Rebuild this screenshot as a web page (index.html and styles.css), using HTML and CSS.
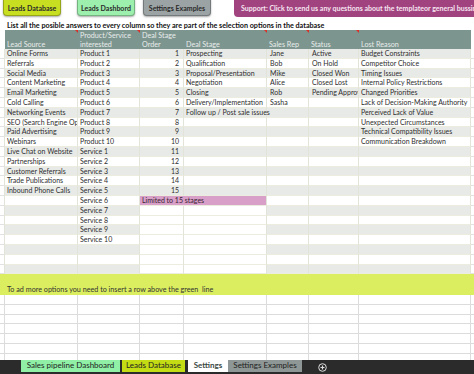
FILE: index.html
```html
<!DOCTYPE html>
<html lang="en">
<head>
  <meta charset="UTF-8">
  <title>Settings</title>
  <link rel="stylesheet" href="styles.css">
</head>
<body>

  <!-- top buttons -->
  <div class="top">
    <a class="btn btn-db">Leads Database</a>
    <a class="btn btn-dash">Leads Dashbord</a>
    <a class="btn btn-set">Settings Examples</a>
    <div class="support">Support: Click to send us any questions about the templateor general bussiness</div>
  </div>

  <div class="note">List  all the posible answers to every column so they are part of the selection options in the database</div>

  <div class="sheet">
    <div class="row head">
      <div class="c blank"></div>
      <div class="c flag"><span>Lead Source</span></div>
      <div class="c flag"><span>Product/Service</span><span>interested</span></div>
      <div class="c"><span>Deal Stage</span><span>Order</span></div>
      <div class="c flag"><span>Deal Stage</span></div>
      <div class="c flag"><span>Sales Rep</span></div>
      <div class="c flag"><span>Status</span></div>
      <div class="c"><span>Lost Reason</span></div>
      <div class="c blank"></div>
    </div>
    <div id="rows"></div>
    <div class="row band">
      <div class="c band-text">To ad more options you need to insert a row above the green&nbsp; line</div>
    </div>
    <div id="empty"></div>
  </div>

  <!-- sheet tabs -->
  <div class="tabs">
    <div class="tab tab-pipe">Sales pipeline Dashboard</div>
    <div class="tab tab-db">Leads Database</div>
    <div class="tab tab-active">Settings</div>
    <div class="tab tab-ex">Settings Examples</div>
    <div class="add">
      <svg width="9" height="9" viewBox="0 0 9 9"><circle cx="4.5" cy="4.5" r="3.8" fill="none" stroke="#ddd" stroke-width="1"/><path d="M4.5 2.5v4M2.5 4.5h4" stroke="#ddd" stroke-width="1.2"/></svg>
    </div>
  </div>

  <script>
    const sources = ["Online Forms", "Referrals", "Social Media", "Content Marketing", "Email Marketing",
      "Cold Calling", "Networking Events", "SEO (Search Engine Optimization)", "Paid Advertising", "Webinars",
      "Live Chat on Website", "Partnerships", "Customer Referrals", "Trade Publications", "Inbound Phone Calls"];
    const products = [];
    for (let i = 1; i <= 10; i++) products.push("Product " + i);
    for (let i = 1; i <= 10; i++) products.push("Service " + i);
    const stages = ["Prospecting", "Qualification", "Proposal/Presentation", "Negotiation", "Closing",
      "Delivery/Implementation", "Follow up / Post sale issues"];
    const reps = ["Jane", "Bob", "Mike", "Alice", "Rob", "Sasha"];
    const status = ["Active", "On Hold", "Closed Won", "Closed Lost", "Pending Approval"];
    const reasons = ["Budget Constraints", "Competitor Choice", "Timing Issues", "Internal Policy Restrictions",
      "Changed Priorities", "Lack of Decision-Making Authority", "Perceived Lack of Value",
      "Unexpected Circumstances", "Technical Compatibility Issues", "Communication Breakdown"];

    const rows = document.getElementById("rows");
    for (let i = 0; i < 23; i++) {
      const row = document.createElement("div");
      row.className = "row data" + (i % 2 === 0 ? " g" : "");
      const inStages = i < 15;
      let html = '<div class="c blank"></div>';
      html += `<div class="c">${sources[i] || ""}</div>`;
      html += `<div class="c">${products[i] || ""}</div>`;
      if (inStages) {
        html += `<div class="c num">${i + 1}</div>`;
        html += `<div class="c${i === 6 ? " spill" : ""}">${stages[i] || ""}</div>`;
      } else if (i === 15) {
        html += '<div class="c pink">Limited to 15 stages</div>';
      } else {
        html += '<div class="c w"></div><div class="c w"></div>';
      }
      html += `<div class="c rep">${reps[i] || ""}</div>`;
      html += `<div class="c st">${status[i] || ""}</div>`;
      html += `<div class="c">${reasons[i] || ""}</div>`;
      html += '<div class="c blank"></div>';
      row.innerHTML = html;
      rows.appendChild(row);
    }

    const empty = document.getElementById("empty");
    for (let i = 0; i < 7; i++) {
      const row = document.createElement("div");
      row.className = "row plain";
      row.innerHTML = '<div class="c"></div>'.repeat(9);
      empty.appendChild(row);
    }
  </script>

</body>
</html>
```

FILE: styles.css
```css
body {
  margin: 0;
  width: 474px;
  height: 374px;
  overflow: hidden;
  background: white;
  font-family: Lato, "Open Sans", sans-serif;
  color: #333;
  position: relative;
}

/* top buttons */
.top {
  height: 20px;
  display: flex;
  align-items: flex-start;
}

.btn {
  height: 19px;
  margin-top: -3px;
  box-sizing: border-box;
  border-radius: 4px;
  border: 1px solid rgba(0, 0, 0, 0.25);
  box-shadow: 0 1px 2px rgba(0, 0, 0, 0.35);
  font-size: 7px;
  font-weight: bold;
  color: #2b2b2b;
  display: flex;
  align-items: center;
  justify-content: center;
  padding-top: 3px;
}

.btn-db {
  background: #c8de20;
  width: 58px;
  margin-left: 3px;
}

.btn-dash {
  background: #9cefad;
  width: 58px;
  margin-left: 16px;
}

.btn-set {
  background: #9ba3a4;
  width: 68px;
  margin-left: 8px;
}

.support {
  flex: 1;
  height: 17px;
  margin-left: 23px;
  background: #a1437f;
  border-radius: 0 0 0 4px;
  color: #f7e6f1;
  font-size: 7px;
  font-weight: bold;
  line-height: 17px;
  padding-left: 7px;
  white-space: nowrap;
  overflow: hidden;
}

.note {
  height: 10px;
  line-height: 11px;
  font-size: 7.2px;
  font-weight: bold;
  color: #111;
  padding-left: 7px;
  white-space: nowrap;
}

/* sheet */
.row {
  display: grid;
  grid-template-columns: 5px 73px 62px 44px 83px 42px 50px 112px 3px;
}

.c {
  box-sizing: border-box;
  padding: 0 2px;
  white-space: nowrap;
  overflow: hidden;
  font-size: 7px;
}

.head {
  height: 19px;
}

.head .c {
  background: #7d958f;
  color: #e8edeb;
  display: flex;
  flex-direction: column;
  justify-content: flex-end;
  line-height: 9px;
  padding-left: 2px;
  position: relative;
  overflow: visible;
  font-size: 7.2px;
}

.head .c.blank {
  background: white;
}

.head .flag::after {
  content: "";
  position: absolute;
  top: 0;
  right: 0;
  border-top: 3px solid #d8312a;
  border-left: 3px solid transparent;
}

.data {
  height: 9.8px;
}

.data .c {
  border-right: 1px solid #e2e4da;
  border-bottom: 1px solid #ecedde;
  line-height: 9px;
  color: #2e2e2e;
}

.data.g .c {
  background: #e8eae8;
}

.data .c.blank {
  background: white;
  border-bottom-color: #e2e2e2;
}

.data .c.w {
  background: white;
}

.data .num {
  text-align: right;
  padding-right: 4px;
}

.data .spill {
  overflow: visible;
  position: relative;
  z-index: 1;
}

.data .rep {
  padding-left: 3px;
}

.data .st {
  padding-left: 3px;
}

.data .c.pink {
  grid-column: span 2;
  background: #d8a0c8;
  color: #3a2333;
}

.band {
  height: 20.6px;
  background: #dbee5f;
  grid-template-columns: 471px;
}

.band-text {
  font-size: 7.2px;
  padding-left: 7px;
  display: flex;
  align-items: flex-end;
  padding-bottom: 1px;
}

.plain {
  height: 9.8px;
}

.plain .c {
  border-right: 1px solid #dcdcdc;
  border-bottom: 1px solid #dcdcdc;
}

/* sheet tabs */
.tabs {
  position: absolute;
  left: 0;
  bottom: 0;
  width: 100%;
  height: 14px;
  background: #2b2b2b;
  display: flex;
  align-items: flex-start;
  padding-left: 21px;
  box-sizing: border-box;
}

.tab {
  height: 12px;
  line-height: 11px;
  font-size: 8px;
  color: #222;
  text-align: center;
  white-space: nowrap;
}

.tab-pipe {
  width: 99px;
  background: #8ff0a6;
}

.tab-db {
  width: 63px;
  margin-left: 2px;
  background: #c4dc14;
}

.tab-active {
  width: 40px;
  margin-left: 3px;
  background: white;
  font-weight: bold;
  color: #3b4a44;
}

.tab-ex {
  width: 74px;
  background: #8e9795;
}

.add {
  margin-left: 16px;
  height: 14px;
  display: flex;
  align-items: center;
}
```
